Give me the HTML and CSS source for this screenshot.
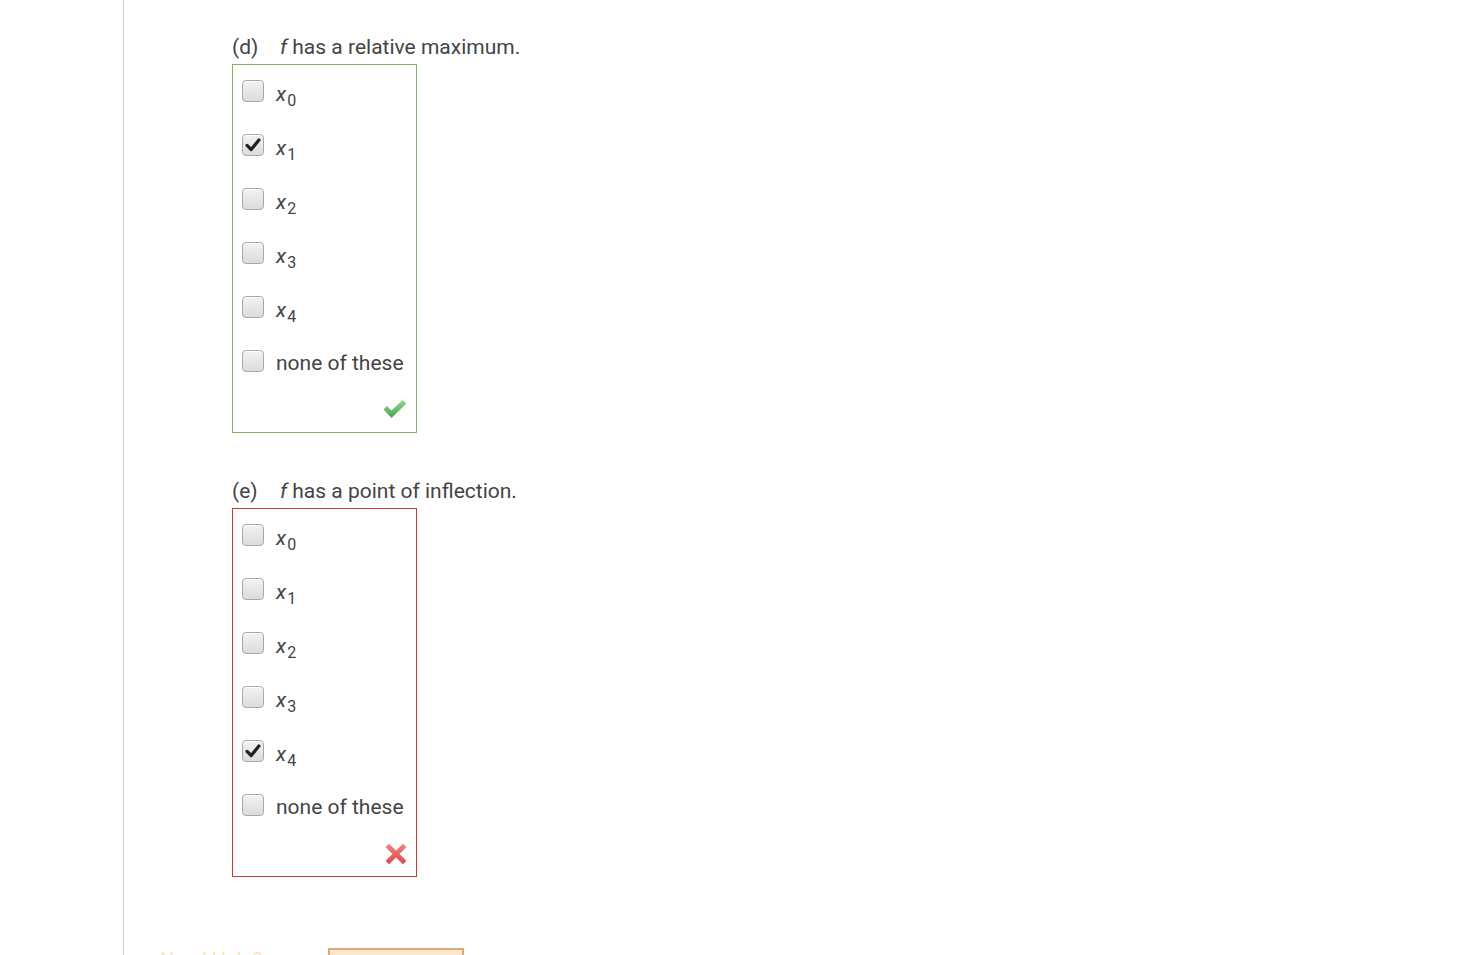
FILE: index.html
```html
<!DOCTYPE html>
<html>
<head>
<meta charset="utf-8">
<link rel="stylesheet" href="styles.css">
</head>
<body>
<div class="page">
  <div class="rail"></div>
  <div class="content">
    <div class="part">
      <div class="prompt"><span class="lbl">(d)</span><span class="fi">f</span> has a relative maximum.</div>
      <div class="choices ok">
        <div class="row"><span class="cb"></span><span class="math"><i>x</i><sub>0</sub></span></div>
        <div class="row"><span class="cb on"><svg viewBox="0 0 22 22"><path d="M4.5 11.5 L9 16 L17.5 5.5" fill="none" stroke="#222" stroke-width="3.6" stroke-linejoin="round" stroke-linecap="round"/></svg></span><span class="math"><i>x</i><sub>1</sub></span></div>
        <div class="row"><span class="cb"></span><span class="math"><i>x</i><sub>2</sub></span></div>
        <div class="row"><span class="cb"></span><span class="math"><i>x</i><sub>3</sub></span></div>
        <div class="row"><span class="cb"></span><span class="math"><i>x</i><sub>4</sub></span></div>
        <div class="row"><span class="cb"></span><span class="txt">none of these</span></div>
        <div class="mark">
          <svg width="26" height="20" viewBox="0 0 26 20"><defs><linearGradient id="g" x1="0" y1="0" x2="0" y2="1"><stop offset="0" stop-color="#96d891"/><stop offset="1" stop-color="#47a350"/></linearGradient></defs><path d="M1.5 10.5 L5 7 L9.5 11.5 L20.5 1 L24.5 4.5 L9.5 19 Z" fill="url(#g)"/></svg>
        </div>
      </div>
    </div>
    <div class="part second">
      <div class="prompt"><span class="lbl">(e)</span><span class="fi">f</span> has a point of inflection.</div>
      <div class="choices bad">
        <div class="row"><span class="cb"></span><span class="math"><i>x</i><sub>0</sub></span></div>
        <div class="row"><span class="cb"></span><span class="math"><i>x</i><sub>1</sub></span></div>
        <div class="row"><span class="cb"></span><span class="math"><i>x</i><sub>2</sub></span></div>
        <div class="row"><span class="cb"></span><span class="math"><i>x</i><sub>3</sub></span></div>
        <div class="row"><span class="cb on"><svg viewBox="0 0 22 22"><path d="M4.5 11.5 L9 16 L17.5 5.5" fill="none" stroke="#222" stroke-width="3.6" stroke-linejoin="round" stroke-linecap="round"/></svg></span><span class="math"><i>x</i><sub>4</sub></span></div>
        <div class="row"><span class="cb"></span><span class="txt">none of these</span></div>
        <div class="mark">
          <svg width="24" height="22" viewBox="0 0 24 22"><defs><linearGradient id="r" x1="0" y1="0" x2="0" y2="1"><stop offset="0" stop-color="#f58484"/><stop offset="1" stop-color="#de4444"/></linearGradient></defs><path d="M1.5 4 L5 0.8 L12 7.5 L19 0.8 L22.5 4 L15.5 11 L22.5 18 L19 21.2 L12 14.5 L5 21.2 L1.5 18 L8.5 11 Z" fill="url(#r)"/></svg>
        </div>
      </div>
    </div>
    <div class="footer">
      <span class="faint">Need Help?</span>
      <span class="btn"></span>
    </div>
  </div>
</div>
</body>
</html>
```

FILE: styles.css
```css
html, body {
  margin: 0;
  padding: 0;
  background: #fff;
  overflow: hidden;
}
body {
  font-family: Roboto, "Liberation Sans", sans-serif;
  color: #444;
}
.page {
  display: flex;
  height: 955px;
}
.rail {
  width: 123px;
  border-right: 1px solid #cfcfcf;
  flex: none;
}
.content {
  padding-left: 108px;
  padding-top: 34px;
  display: flex;
  flex-direction: column;
}
.prompt {
  font-size: 21px;
  line-height: 26px;
  color: #444;
  height: 30px;
}
.lbl {
  display: inline-block;
  width: 48px;
}
.fi {
  font-style: italic;
}
.second {
  margin-top: 45px;
}
.choices {
  width: 185px;
  box-sizing: border-box;
  padding: 15px 0 0 9px;
  height: 369px;
}
.choices.ok { border: 1px solid #86b161; }
.choices.bad { border: 1px solid #cc3b3b; }
.row {
  display: flex;
  align-items: flex-start;
  height: 54px;
}
.cb {
  width: 22px;
  height: 22px;
  box-sizing: border-box;
  border: 1px solid #a9a9a9;
  border-radius: 4px;
  background: linear-gradient(#f2f2f2, #dcdcdc);
  box-shadow: inset 0 1px 0 #fff;
  flex: none;
}
.cb svg {
  display: block;
  width: 20px;
  height: 20px;
}
.math {
  margin-left: 12px;
  font-size: 21px;
  line-height: 26px;
  color: #444;
  margin-top: 1px;
}
.math i {
  font-style: italic;
}
.math sub {
  font-size: 16px;
  vertical-align: -5px;
  line-height: 0;
  margin-left: 1px;
}
.txt {
  margin-left: 12px;
  font-size: 21px;
  line-height: 26px;
  color: #444;
}
.mark {
  display: flex;
  justify-content: flex-end;
  padding-right: 8px;
  margin-top: -5px;
}
.footer {
  margin-top: 71px;
  display: flex;
  align-items: flex-start;
  margin-left: -72px;
}
.faint {
  font-size: 20px;
  color: #fbe3b8;
  width: 168px;
  line-height: 20px;
  margin-top: 2px;
}
.btn {
  width: 136px;
  height: 30px;
  box-sizing: border-box;
  border: 2px solid #d9a977;
  background: #fde7cc;
}
```
